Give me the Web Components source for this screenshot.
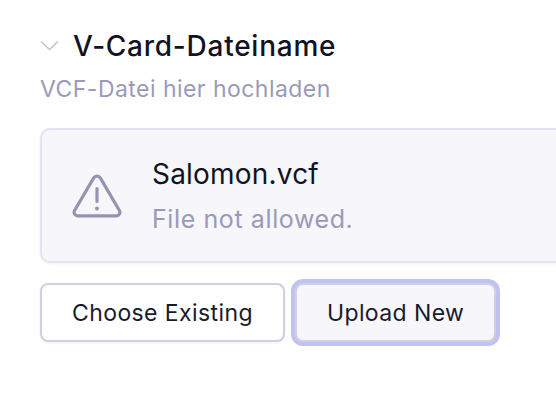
<!DOCTYPE html>
<html>
<head>
<meta charset="utf-8">
<style>
    html, body { margin: 0; background: #fff; }
    body {
        font-family: Inter, "Liberation Sans", sans-serif;
        height: 404px;
        overflow: hidden;
    }
</style>
</head>
<body>
<upload-feld tittel="V-Card-Dateiname" hjelp="VCF-Datei hier hochladen">
    <fil-kort navn="Salomon.vcf" feil="File not allowed."></fil-kort>
    <knapp-komponent>Choose Existing</knapp-komponent>
    <knapp-komponent aktiv>Upload New</knapp-komponent>
</upload-feld>
<script>
class UploadFelt extends HTMLElement {
    constructor() {
        super()
        this.shadow = this.attachShadow({ mode: 'open' });
    }

    connectedCallback() {
        this.shadow.innerHTML = `
            <style>
                :host {
                    display: block;
                    padding: 28px 0 0 40px;
                    height: 404px;
                    box-sizing: border-box;
                    overflow: hidden;
                }
                .topp {
                    display: flex;
                    align-items: center;
                    gap: 14px;
                    height: 36px;
                }
                svg { display: block; margin-top: -2px; }
                h2 {
                    margin: 0;
                    font-size: 28px;
                    font-weight: 500;
                    letter-spacing: 0.75px;
                    color: #13131f;
                }
                p {
                    margin: 11px 0 0;
                    font-size: 23px;
                    letter-spacing: 0.46px;
                    line-height: 29px;
                    color: #9a9ab8;
                }
                .innhold { margin: 24px -60px 0 0; }
                .knapper {
                    display: flex;
                    gap: 10px;
                    margin-top: 20px;
                }
            </style>
            <div class="topp">
                <svg width="19" height="11" viewBox="0 0 19 11" fill="none" stroke="#c3c3d6" stroke-width="1.6">
                    <path d="M1 1.5 L9.5 9.5 L18 1.5"/>
                </svg>
                <h2>${this.getAttribute('tittel')}</h2>
            </div>
            <p>${this.getAttribute('hjelp')}</p>
            <div class="innhold"><slot name="kort"></slot></div>
            <div class="knapper"><slot></slot></div>
        `
        this.querySelector('fil-kort').slot = 'kort'
    }
}

class FilKort extends HTMLElement {
    constructor() {
        super()
        this.shadow = this.attachShadow({ mode: 'open' });
    }

    connectedCallback() {
        this.shadow.innerHTML = `
            <style>
                :host {
                    display: flex;
                    align-items: center;
                    gap: 30px;
                    height: 135px;
                    box-sizing: border-box;
                    padding-left: 30px;
                    background: #f6f6fb;
                    border: 2px solid #e3e3f1;
                    border-radius: 10px;
                    box-shadow: 0 1px 3px rgba(30, 30, 70, 0.06);
                }
                svg { display: block; flex: none; }
                .navn {
                    font-size: 28px;
                    letter-spacing: 0.2px;
                    line-height: 34px;
                    color: #13131f;
                }
                .feil {
                    margin-top: 13px;
                    font-size: 25px;
                    letter-spacing: 0.6px;
                    line-height: 30px;
                    color: #9a9ab8;
                }
            </style>
            <svg width="50" height="44" viewBox="0 0 50 44" fill="none" stroke="#9494b0" stroke-width="3.2" stroke-linecap="round" stroke-linejoin="round">
                <path d="M21.7 3.9 L2.6 36.5 C1.2 39.2 2.9 41.8 5.8 41.8 H44.2 C47.1 41.8 48.8 39.2 47.4 36.5 L28.3 3.9 C26.8 1.4 23.2 1.4 21.7 3.9 Z"/>
                <path d="M25 14.5 V27.5"/>
                <path d="M25 34.5 V34.6" stroke-width="4"/>
            </svg>
            <div>
                <div class="navn">${this.getAttribute('navn')}</div>
                <div class="feil">${this.getAttribute('feil')}</div>
            </div>
        `
    }
}

class KnappKomponent extends HTMLElement {
    constructor() {
        super()
        this.shadow = this.attachShadow({ mode: 'open' });
    }

    connectedCallback() {
        this.shadow.innerHTML = `
            <style>
                :host {
                    display: flex;
                    align-items: center;
                    height: 59px;
                    box-sizing: border-box;
                    padding: 0 30px;
                    background: #fff;
                    border: 2px solid #d0d0e2;
                    border-radius: 8px;
                    font-size: 23px;
                    letter-spacing: 0.4px;
                    color: #1a1a2a;
                    box-shadow: 0 1px 3px rgba(30, 30, 70, 0.06);
                }
                :host([aktiv]) {
                    background: #f6f6fb;
                    box-shadow: 0 0 0 4px #c0c2f2;
                }
            </style>
            <slot></slot>
        `
    }
}

customElements.define('upload-feld', UploadFelt);
customElements.define('fil-kort', FilKort);
customElements.define('knapp-komponent', KnappKomponent);
</script>
</body>
</html>
